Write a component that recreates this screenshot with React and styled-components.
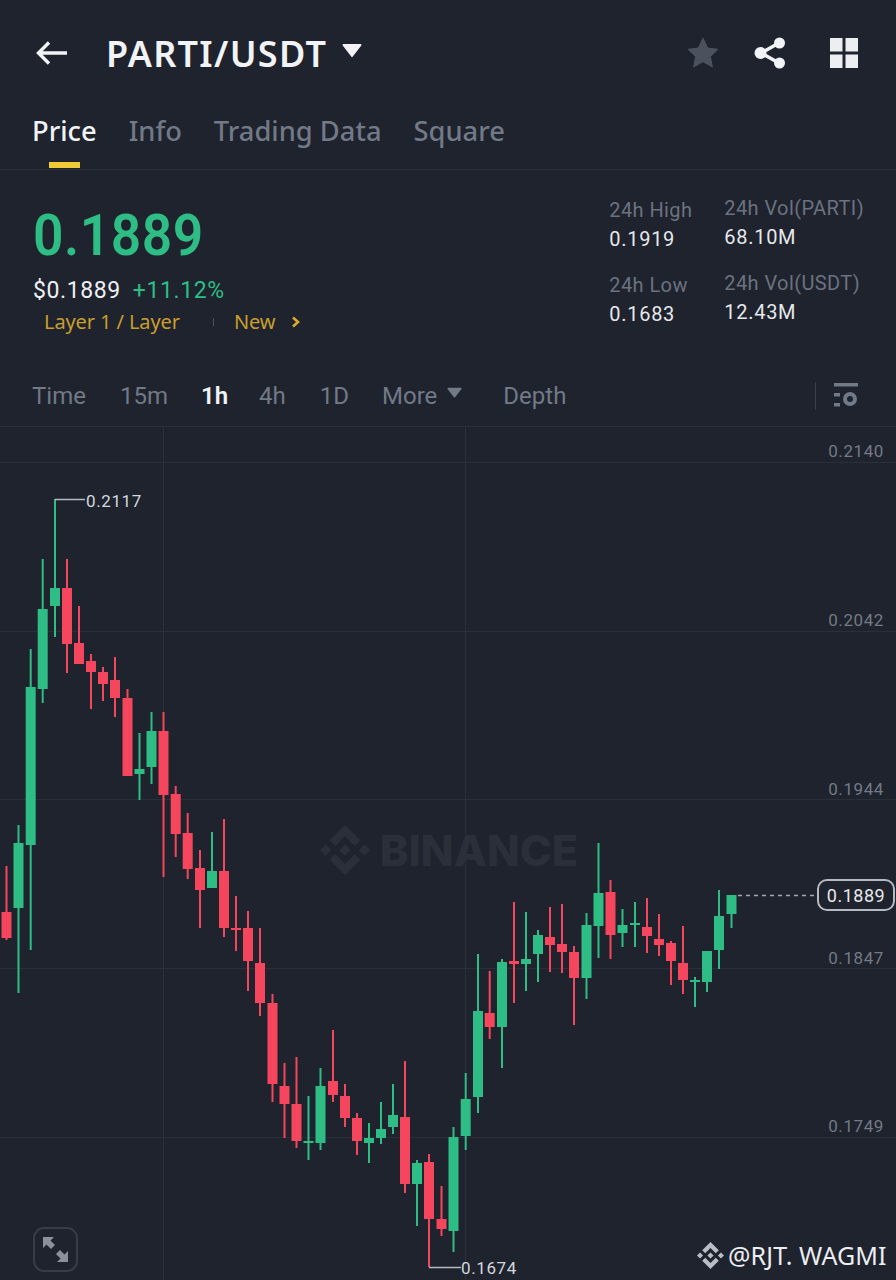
import React from 'react';
import styled, { createGlobalStyle } from 'styled-components';

const GlobalStyle = createGlobalStyle`
  html, body { margin: 0; padding: 0; background: #1e232d; }
  * { box-sizing: border-box; }
`;

const UI = `"Noto Sans", "Liberation Sans", sans-serif`;
const NUM = `Roboto, "Noto Sans", sans-serif`;
const GREEN = '#2ebd85';
const RED = '#f6465d';

const Page = styled.div`
  width: 896px;
  height: 1280px;
  overflow: hidden;
  background: #1e232d;
  font-family: ${UI};
  display: flex;
  flex-direction: column;
`;

const Header = styled.header`
  height: 106px;
  flex: none;
  display: flex;
  align-items: center;
  padding: 0 38px 0 36px;
`;
const BackIcon = styled.svg`
  width: 32px;
  height: 26px;
  margin-right: 38px;
`;
const Title = styled.h1`
  margin: 0;
  font-size: 36px;
  font-weight: 600;
  color: #f1f3f6;
  letter-spacing: 1.3px;
`;
const Caret = styled.svg`
  width: ${p => p.$size}px;
  height: ${p => p.$size * 0.75}px;
  margin-left: ${p => p.$gap}px;
  margin-bottom: ${p => p.$lift}px;
`;
const HeaderIcons = styled.div`
  margin-left: auto;
  display: flex;
  align-items: center;
`;
const HeaderIcon = styled.svg`
  display: block;
  margin-right: ${p => p.$gap}px;
`;

const Tabs = styled.nav`
  height: 64px;
  flex: none;
  display: flex;
  gap: 32px;
  padding: 0 0 0 32px;
  border-bottom: 1px solid #2a2f39;
`;
const Tab = styled.div`
  position: relative;
  font-size: 27.3px;
  font-weight: 500;
  line-height: 50px;
  color: ${p => (p.$active ? '#f1f3f6' : '#727987')};
  &::after {
    content: '';
    display: ${p => (p.$active ? 'block' : 'none')};
    position: absolute;
    left: 17px;
    width: 31px;
    top: 56px;
    height: 6px;
    background: #f0cb35;
  }
`;

const Summary = styled.section`
  height: 193px;
  flex: none;
  display: flex;
  justify-content: space-between;
  padding: 0 33px;
`;
const PriceCol = styled.div`
  display: flex;
  flex-direction: column;
`;
const BigPrice = styled.div`
  margin-top: 31px;
  font-family: ${NUM};
  font-size: 58px;
  line-height: 68px;
  font-weight: 600;
  letter-spacing: 0.6px;
  color: ${GREEN};
  transform: scaleX(0.92);
  transform-origin: left center;
`;
const SubRow = styled.div`
  margin-top: 7px;
  display: flex;
  gap: 12px;
  font-family: ${NUM};
  font-size: 23px;
  line-height: 30px;
  letter-spacing: 0.6px;
`;
const Usd = styled.span`
  color: #eef0f3;
`;
const Change = styled.span`
  color: ${GREEN};
`;
const TagRow = styled.div`
  margin: 2px 0 0 11px;
  display: flex;
  align-items: center;
  font-size: 20px;
  line-height: 28px;
  letter-spacing: -0.1px;
  color: #c99e2e;
`;
const TagDivider = styled.i`
  width: 1px;
  height: 8px;
  margin: 0 20px 0 33px;
  background: #4a505c;
`;
const TagArrow = styled.svg`
  width: 10px;
  height: 12px;
  margin-left: 16px;
`;
const Stats = styled.div`
  margin: 26px -1px 0 0;
  display: grid;
  grid-template-columns: 115px auto;
  grid-auto-rows: 75px;
`;
const Stat = styled.div`
  margin-top: ${p => (p.$up ? -2 : 0)}px;
  font-family: ${NUM};
  font-size: 20px;
`;
const StatLabel = styled.div`
  line-height: 29px;
  color: #6c7280;
  letter-spacing: 0.4px;
`;
const StatValue = styled.div`
  line-height: 29px;
  color: #e6e8ec;
  letter-spacing: 0.7px;
`;

const Intervals = styled.nav`
  height: 64px;
  flex: none;
  display: flex;
  align-items: center;
  padding: 2px 36px 0 32px;
  border-bottom: 1px solid #2a2f39;
  font-family: ${NUM};
  font-size: 24px;
  color: #727987;
`;
const Interval = styled.span`
  margin-left: ${p => p.$lead || 0}px;
  margin-right: ${p => p.$gap}px;
  font-weight: ${p => (p.$active ? 600 : 400)};
  color: ${p => (p.$active ? '#f1f3f6' : '#727987')};
`;
const IntervalTools = styled.div`
  margin-left: auto;
  display: flex;
  align-items: center;
  gap: 16px;
`;
const ToolDivider = styled.i`
  width: 1px;
  height: 28px;
  background: #3a404b;
`;

const Chart = styled.main`
  position: relative;
  flex: 1;
`;
const ChartSvg = styled.svg`
  display: block;
  width: 896px;
  height: 853px;
`;
const AxisLabel = styled.span`
  position: absolute;
  right: 12px;
  top: ${p => p.$y - 427 - 12}px;
  font-family: ${NUM};
  font-size: 17px;
  line-height: 24px;
  letter-spacing: 0.6px;
  color: #747a86;
`;
const PeakLabel = styled.span`
  position: absolute;
  left: ${p => p.$x}px;
  top: ${p => p.$y - 427 - 12}px;
  font-family: ${NUM};
  font-size: 17px;
  line-height: 24px;
  letter-spacing: 0.6px;
  color: #d5d8de;
`;
const LastPrice = styled.span`
  position: absolute;
  left: 817px;
  top: 452px;
  width: 78px;
  height: 32px;
  border: 2px solid #b4b9c2;
  border-radius: 10px;
  background: #1e232d;
  font-family: ${NUM};
  font-size: 18px;
  line-height: 29px;
  text-align: center;
  letter-spacing: 0.5px;
  color: #e6e8ec;
`;
const Watermark = styled.div`
  position: absolute;
  left: 320px;
  top: 398px;
  display: flex;
  align-items: center;
  gap: 10px;
  font-family: "Inter", ${UI};
  font-size: 43px;
  line-height: 50px;
  font-weight: 800;
  color: #2a2f3a;
`;
const ExpandButton = styled.div`
  position: absolute;
  left: 33px;
  top: 800px;
  width: 45px;
  height: 45px;
  border: 2px solid #373c48;
  border-radius: 11px;
  display: flex;
  align-items: center;
  justify-content: center;
`;
const Credit = styled.div`
  position: absolute;
  left: 697px;
  top: 811px;
  display: flex;
  align-items: center;
  gap: 4px;
  font-size: 25px;
  line-height: 34px;
  letter-spacing: 0.1px;
  color: #eceef2;
  white-space: nowrap;
`;

// [x, wickTop, bodyTop, bodyBottom, wickBottom, up]
const candles = [
  [6.5, 866, 912, 938, 940, 0],
  [18.5, 825, 843, 908, 993, 1],
  [30.7, 649, 687, 845, 950, 1],
  [42.7, 559, 609, 689, 703, 1],
  [55, 499, 588, 606, 637, 1],
  [67, 559, 588, 644, 673, 0],
  [79, 606, 643, 664, 664, 0],
  [91, 654, 661, 672, 709, 0],
  [103, 667, 672, 684, 701, 0],
  [115, 657, 680, 698, 717, 0],
  [127.5, 689, 698, 776, 776, 0],
  [139.5, 733, 769, 774, 800, 1],
  [151.5, 712, 731, 767, 784, 1],
  [163.5, 712, 731, 795, 877, 0],
  [175.7, 786, 794, 834, 857, 0],
  [187.7, 813, 833, 869, 879, 0],
  [200, 850, 868, 890, 928, 0],
  [212, 832, 871, 888, 888, 1],
  [224, 819, 871, 928, 937, 0],
  [236, 896, 928, 930, 951, 0],
  [248, 911, 928, 961, 991, 0],
  [260, 928, 963, 1003, 1016, 0],
  [272.5, 994, 1003, 1084, 1102, 0],
  [284.5, 1063, 1086, 1104, 1138, 0],
  [296.5, 1057, 1104, 1141, 1148, 0],
  [308.5, 1096, 1141, 1143, 1160, 1],
  [320.5, 1068, 1086, 1143, 1150, 1],
  [333, 1030, 1081, 1095, 1102, 0],
  [345, 1084, 1096, 1118, 1127, 0],
  [357, 1113, 1118, 1141, 1155, 0],
  [369, 1123, 1138, 1143, 1163, 1],
  [381, 1102, 1129, 1138, 1144, 1],
  [393, 1084, 1115, 1127, 1134, 1],
  [405, 1061, 1117, 1184, 1193, 0],
  [417, 1160, 1163, 1184, 1226, 1],
  [429, 1154, 1162, 1219, 1267, 0],
  [441.5, 1186, 1219, 1229, 1236, 0],
  [453.5, 1127, 1137, 1231, 1252, 1],
  [465.7, 1073, 1099, 1136, 1150, 1],
  [478, 954, 1011, 1097, 1113, 1],
  [489.7, 971, 1013, 1027, 1039, 0],
  [502, 959, 962, 1027, 1068, 1],
  [514, 902, 961, 964, 1003, 0],
  [526, 912, 959, 964, 991, 1],
  [538, 930, 935, 954, 982, 1],
  [550, 907, 937, 945, 972, 0],
  [562, 904, 944, 952, 973, 0],
  [574, 946, 952, 978, 1025, 0],
  [586.5, 913, 925, 978, 999, 1],
  [598.5, 843, 893, 926, 958, 1],
  [610.5, 880, 892, 935, 959, 0],
  [622.5, 909, 925, 933, 947, 1],
  [635, 902, 923, 925, 947, 1],
  [647, 898, 927, 936, 953, 0],
  [659, 914, 939, 945, 956, 0],
  [671, 941, 943, 961, 985, 0],
  [683, 926, 963, 980, 994, 0],
  [695, 977, 980, 982, 1007, 1],
  [707, 951, 951, 982, 992, 1],
  [719, 890, 916, 950, 969, 1],
  [731.5, 895, 895, 914, 928, 1],
];

const gridRows = [462, 631, 799, 968, 1137];
const gridCols = [163, 465];

function BinanceMark({ size, color }) {
  return (
    <svg width={size} height={size} viewBox="0 0 126.61 126.61" fill={color}>
      <path d="M38.73 53.2l24.59-24.58 24.6 24.6 14.3-14.31L63.32 0 24.43 38.9l14.3 14.3zM0 63.31l14.3-14.31 14.31 14.31-14.31 14.3zM38.73 73.41l24.59 24.59 24.6-24.6 14.31 14.29-38.9 38.91-38.91-38.88v-.03zM98 63.31l14.3-14.31 14.31 14.3-14.31 14.32zM77.83 63.3L63.32 48.78 52.59 59.51l-1.24 1.23-2.54 2.54 14.51 14.5 14.51-14.47z" />
    </svg>
  );
}

function Candles() {
  return (
    <ChartSvg viewBox="0 427 896 853">
      {gridRows.map(y => <line key={y} x1="0" x2="896" y1={y + 0.5} y2={y + 0.5} stroke="#2a2f39" />)}
      {gridCols.map(x => <line key={x} x1={x + 0.5} x2={x + 0.5} y1="427" y2="1280" stroke="#2a2f39" />)}
      {candles.map(([x, top, bodyTop, bodyBottom, bottom, up]) => {
        const color = up ? GREEN : RED;
        return (
          <g key={x} fill={color}>
            <rect x={x - 1} y={top} width="2" height={bottom - top} />
            <rect x={x - 5} y={bodyTop} width="10" height={Math.max(bodyBottom - bodyTop, 2)} />
          </g>
        );
      })}
      <path d="M55 499.5H85" stroke="#b4b9c2" strokeWidth="1.5" fill="none" />
      <path d="M429 1267.5H461" stroke="#b4b9c2" strokeWidth="1.5" fill="none" />
      <path d="M738 895.5H817" stroke="#a4a9b2" strokeWidth="1.5" strokeDasharray="4 4" fill="none" />
    </ChartSvg>
  );
}

export default function App() {
  return (
    <Page>
      <GlobalStyle />
      <Header>
        <BackIcon viewBox="0 0 32 26">
          <path d="M31 13H3M13 2.5L2.5 13 13 23.5" fill="none" stroke="#f1f3f6" strokeWidth="3.4" />
        </BackIcon>
        <Title>PARTI/USDT</Title>
        <Caret $size={20} $gap={15} $lift={6} viewBox="0 0 20 15">
          <path d="M1.5 1h17a1 1 0 0 1 .8 1.6l-8.5 11a1 1 0 0 1-1.6 0l-8.5-11A1 1 0 0 1 1.5 1z" fill="#f1f3f6" />
        </Caret>
        <HeaderIcons>
          <HeaderIcon $gap={35} width="32" height="32" viewBox="0 0 32 32">
            <path d="M16 1l4.7 10 10.3 1.3-7.6 7.2 2 10.5-9.4-5.2L6.6 30l2-10.5L1 12.3 11.3 11z" fill="#4b515d" stroke="#4b515d" strokeLinejoin="round" />
          </HeaderIcon>
          <HeaderIcon $gap={44} width="32" height="32" viewBox="0 0 32 32">
            <path d="M25 6L7 16l18 10" fill="none" stroke="#f1f3f6" strokeWidth="3.6" />
            <circle cx="25.5" cy="6" r="5.5" fill="#f1f3f6" />
            <circle cx="6.5" cy="16" r="6" fill="#f1f3f6" />
            <circle cx="25.5" cy="26" r="5.5" fill="#f1f3f6" />
          </HeaderIcon>
          <HeaderIcon $gap={0} width="28" height="30" viewBox="0 0 28 30" fill="#eceef2">
            <rect x="0" y="0" width="12.5" height="13.5" />
            <rect x="15.5" y="0" width="12.5" height="13.5" />
            <rect x="0" y="16.5" width="12.5" height="13.5" />
            <rect x="15.5" y="16.5" width="12.5" height="13.5" />
          </HeaderIcon>
        </HeaderIcons>
      </Header>

      <Tabs>
        <Tab $active>Price</Tab>
        <Tab>Info</Tab>
        <Tab>Trading Data</Tab>
        <Tab>Square</Tab>
      </Tabs>

      <Summary>
        <PriceCol>
          <BigPrice>0.1889</BigPrice>
          <SubRow>
            <Usd>$0.1889</Usd>
            <Change>+11.12%</Change>
          </SubRow>
          <TagRow>
            Layer 1 / Layer
            <TagDivider />
            New
            <TagArrow viewBox="0 0 10 12">
              <path d="M2 1.5L7 6l-5 4.5" fill="none" stroke="#d9a92f" strokeWidth="2.6" />
            </TagArrow>
          </TagRow>
        </PriceCol>
        <Stats>
          <Stat>
            <StatLabel>24h High</StatLabel>
            <StatValue>0.1919</StatValue>
          </Stat>
          <Stat $up>
            <StatLabel>24h Vol(PARTI)</StatLabel>
            <StatValue>68.10M</StatValue>
          </Stat>
          <Stat>
            <StatLabel>24h Low</StatLabel>
            <StatValue>0.1683</StatValue>
          </Stat>
          <Stat $up>
            <StatLabel>24h Vol(USDT)</StatLabel>
            <StatValue>12.43M</StatValue>
          </Stat>
        </Stats>
      </Summary>

      <Intervals>
        <Interval $gap={34}>Time</Interval>
        <Interval $gap={33}>15m</Interval>
        <Interval $gap={31} $active>1h</Interval>
        <Interval $gap={34}>4h</Interval>
        <Interval $gap={33}>1D</Interval>
        <Interval $gap={10}>More</Interval>
        <Caret $size={15} $gap={0} $lift={5} viewBox="0 0 20 15">
          <path d="M1.5 1h17a1 1 0 0 1 .8 1.6l-8.5 11a1 1 0 0 1-1.6 0l-8.5-11A1 1 0 0 1 1.5 1z" fill="#727987" />
        </Caret>
        <Interval $gap={0} $lead={41}>Depth</Interval>
        <IntervalTools>
          <ToolDivider />
          <svg width="28" height="28" viewBox="0 0 28 28" fill="#727987">
            <rect x="2" y="1" width="24" height="3.5" />
            <rect x="2" y="11" width="6" height="3.5" />
            <rect x="2" y="21" width="6" height="3.5" />
            <circle cx="18" cy="17" r="5" fill="none" stroke="#727987" strokeWidth="4" />
          </svg>
        </IntervalTools>
      </Intervals>

      <Chart>
        <Candles />
        <Watermark>
          <BinanceMark size={50} color="#2a2f3a" />
          BINANCE
        </Watermark>
        <AxisLabel $y={451}>0.2140</AxisLabel>
        <AxisLabel $y={620}>0.2042</AxisLabel>
        <AxisLabel $y={789}>0.1944</AxisLabel>
        <AxisLabel $y={958}>0.1847</AxisLabel>
        <AxisLabel $y={1126}>0.1749</AxisLabel>
        <PeakLabel $x={86} $y={501}>0.2117</PeakLabel>
        <PeakLabel $x={461} $y={1268}>0.1674</PeakLabel>
        <LastPrice>0.1889</LastPrice>
        <ExpandButton>
          <svg width="27" height="27" viewBox="0 0 27 27" fill="#8b909a">
            <path d="M1 1h11L8.5 4.5 13 9l-4 4-4.5-4.5L1 12z" />
            <path d="M26 26H15l3.5-3.5L14 18l4-4 4.5 4.5L26 15z" />
          </svg>
        </ExpandButton>
        <Credit>
          <BinanceMark size={27} color="#b9bdc5" />
          @RJT. WAGMI
        </Credit>
      </Chart>
    </Page>
  );
}
